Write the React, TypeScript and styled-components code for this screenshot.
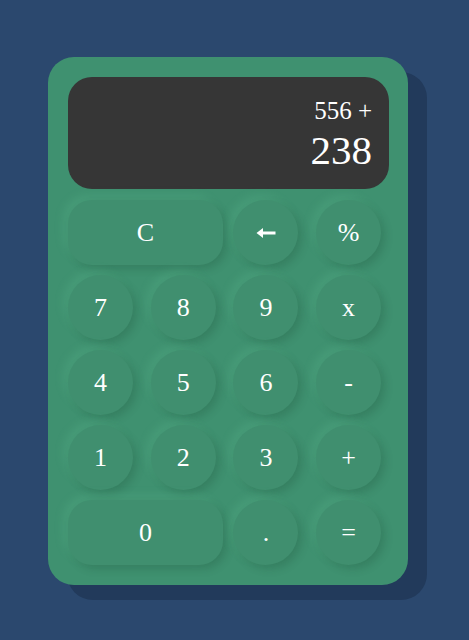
import React from "react";
import styled, { createGlobalStyle } from "styled-components";

const Global = createGlobalStyle`
  html, body { margin: 0; padding: 0; background: #2b486e; }
  body { font-family: "Liberation Serif", "Times New Roman", serif; }
`;

const Page = styled.div`
  width: 469px;
  height: 640px;
  box-sizing: border-box;
  padding: 57px 0 0 48px;
  background: #2b486e;
`;

const Calculator = styled.div`
  width: 360px;
  box-sizing: border-box;
  padding: 20px 19px 20px 20px;
  background: #3f9170;
  border-radius: 26px;
  box-shadow: 19px 15px 0 #223a5b;
  display: flex;
  flex-direction: column;
  gap: 11px;
`;

const Display = styled.div`
  height: 112px;
  box-sizing: border-box;
  background: #363636;
  border-radius: 24px;
  display: flex;
  flex-direction: column;
  align-items: flex-end;
  justify-content: center;
  padding: 4px 17px 0 17px;
  color: #ffffff;
`;

const Previous = styled.div`
  font-size: 25px;
  line-height: 30px;
`;

const Current = styled.div`
  font-size: 41px;
  line-height: 48px;
`;

const Keys = styled.div`
  display: grid;
  grid-template-columns: repeat(4, 65px);
  grid-auto-rows: 65px;
  column-gap: 17.7px;
  row-gap: 10px;
`;

const Key = styled.button<{ $wide?: boolean }>`
  grid-column: ${(p) => (p.$wide ? "span 2" : "span 1")};
  width: ${(p) => (p.$wide ? "155px" : "65px")};
  height: 65px;
  border: none;
  border-radius: ${(p) => (p.$wide ? "24px" : "50%")};
  background: #408f6f;
  color: #ffffff;
  font-family: "Liberation Serif", "Times New Roman", serif;
  font-size: 26px;
  padding: 0;
  display: flex;
  align-items: center;
  justify-content: center;
  box-shadow: 4px 4px 9px rgba(20, 60, 40, 0.2),
    -5px -5px 10px rgba(120, 220, 170, 0.14);
  cursor: pointer;
`;

const Arrow = () => (
  <svg width="20" height="12" viewBox="0 0 20 12">
    <path d="M0.5 6 L7 1 L7 4.5 L19.5 4.5 L19.5 7.5 L7 7.5 L7 11 Z" fill="#fff" />
  </svg>
);

export default function App() {
  const rows: { label: React.ReactNode; wide?: boolean }[] = [
    { label: "C", wide: true },
    { label: <Arrow /> },
    { label: "%" },
    { label: "7" },
    { label: "8" },
    { label: "9" },
    { label: "x" },
    { label: "4" },
    { label: "5" },
    { label: "6" },
    { label: "-" },
    { label: "1" },
    { label: "2" },
    { label: "3" },
    { label: "+" },
    { label: "0", wide: true },
    { label: "." },
    { label: "=" },
  ];
  return (
    <Page>
      <Global />
      <Calculator>
        <Display>
          <Previous>556 +</Previous>
          <Current>238</Current>
        </Display>
        <Keys>
          {rows.map((k, i) => (
            <Key key={i} $wide={k.wide}>
              {k.label}
            </Key>
          ))}
        </Keys>
      </Calculator>
    </Page>
  );
}
